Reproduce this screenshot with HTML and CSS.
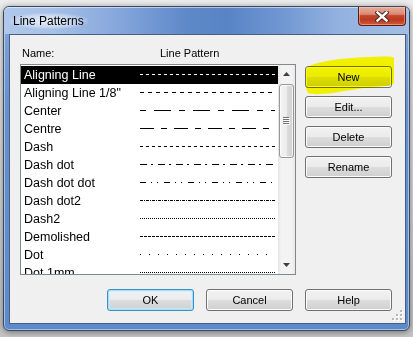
FILE: index.html
```html
<!DOCTYPE html>
<html>
<head>
<meta charset="utf-8">
<title>Line Patterns</title>
<link rel="stylesheet" href="styles.css">
</head>
<body>
<div class="window">
  <div class="titlebar">
    <span class="title">Line Patterns</span>
    <div class="close">
      <svg width="14" height="11" viewBox="0 0 14 11">
        <path class="x-out" d="M2.5 1.5 L11.5 9.5 M11.5 1.5 L2.5 9.5"/>
        <path class="x-in" d="M2.5 1.5 L11.5 9.5 M11.5 1.5 L2.5 9.5"/>
      </svg>
    </div>
  </div>
  <div class="frame">
    <div class="client">
      <div class="main">
        <div class="left">
          <div class="header"><span class="h-name">Name:</span><span class="h-pattern">Line Pattern</span></div>
          <div class="listbox">
            <div class="rows">
              <div class="row selected"><span class="name">Aligning Line</span><svg class="pat" width="135" height="18"><line x1="0" y1="8.5" x2="135" y2="8.5" stroke-dasharray="3 3"/></svg></div>
              <div class="row"><span class="name">Aligning Line 1/8"</span><svg class="pat" width="135" height="18"><line x1="0" y1="8.5" x2="133" y2="8.5" stroke-dasharray="4 4"/></svg></div>
              <div class="row"><span class="name">Center</span><svg class="pat" width="135" height="18"><line x1="0" y1="8.5" x2="135" y2="8.5" stroke-dasharray="6 8 17 8"/></svg></div>
              <div class="row"><span class="name">Centre</span><svg class="pat" width="135" height="18"><line x1="0" y1="8.5" x2="135" y2="8.5" stroke-dasharray="14 7 6 7"/></svg></div>
              <div class="row"><span class="name">Dash</span><svg class="pat" width="135" height="18"><line x1="0" y1="8.5" x2="135" y2="8.5" stroke-dasharray="3 3"/></svg></div>
              <div class="row"><span class="name">Dash dot</span><svg class="pat" width="135" height="18"><line x1="0" y1="8.5" x2="135" y2="8.5" stroke-dasharray="7 4 2 5"/></svg></div>
              <div class="row"><span class="name">Dash dot dot</span><svg class="pat" width="135" height="18"><line x1="0" y1="8.5" x2="135" y2="8.5" stroke-dasharray="6 5 1 5 1 6"/></svg></div>
              <div class="row"><span class="name">Dash dot2</span><svg class="pat" width="135" height="18"><line x1="0" y1="8.5" x2="135" y2="8.5" stroke-dasharray="3 1 1 1"/></svg></div>
              <div class="row"><span class="name">Dash2</span><svg class="pat" width="135" height="18"><line x1="0" y1="8.5" x2="135" y2="8.5" stroke-dasharray="1 1"/></svg></div>
              <div class="row"><span class="name">Demolished</span><svg class="pat" width="135" height="18"><line x1="0" y1="8.5" x2="135" y2="8.5" stroke-dasharray="3 1"/></svg></div>
              <div class="row"><span class="name">Dot</span><svg class="pat" width="135" height="18"><line x1="0" y1="8.5" x2="135" y2="8.5" stroke-dasharray="1 8"/></svg></div>
              <div class="row"><span class="name">Dot 1mm</span><svg class="pat" width="135" height="18"><line x1="0" y1="8.5" x2="135" y2="8.5" stroke-dasharray="1 1"/></svg></div>
            </div>
            <div class="scrollbar">
              <div class="sb-btn">
                <svg width="7" height="4" viewBox="0 0 7 4"><path class="arrow" d="M0 4 L3.5 0 L7 4 Z"/></svg>
              </div>
              <div class="sb-track">
                <div class="thumb">
                  <svg class="gripper" width="7" height="8" viewBox="0 0 7 8">
                    <path class="g-dark" d="M0 0.5 H6 M0 2.5 H6 M0 4.5 H6 M0 6.5 H6"/>
                    <path class="g-light" d="M1 1.5 H7 M1 3.5 H7 M1 5.5 H7 M1 7.5 H7"/>
                  </svg>
                </div>
              </div>
              <div class="sb-btn">
                <svg width="7" height="4" viewBox="0 0 7 4"><path class="arrow" d="M0 0 L7 0 L3.5 4 Z"/></svg>
              </div>
            </div>
          </div>
        </div>
        <div class="side">
          <button class="btn">New</button>
          <button class="btn">Edit...</button>
          <button class="btn">Delete</button>
          <button class="btn">Rename</button>
          <svg class="highlight" width="92" height="40" viewBox="0 0 92 40">
            <path d="M1 13 C4 9 12 7 22 5 C38 2 60 1 78 0.5 C84 0.5 88 0.5 89 2 L89 27 C86 30 80 30 70 31 C55 32 40 35 28 37 C18 38 8 39 3 37 C0.5 34 0.5 24 1 13 Z"/>
          </svg>
        </div>
      </div>
      <div class="footer">
        <button class="btn default">OK</button>
        <button class="btn">Cancel</button>
        <button class="btn">Help</button>
      </div>
      <svg class="sizegrip" width="11" height="11" viewBox="0 0 11 11">
        <rect class="gl" x="9" y="1" width="2" height="2"/><rect class="gd" x="8" y="0" width="2" height="2"/>
        <rect class="gl" x="5" y="5" width="2" height="2"/><rect class="gd" x="4" y="4" width="2" height="2"/>
        <rect class="gl" x="9" y="5" width="2" height="2"/><rect class="gd" x="8" y="4" width="2" height="2"/>
        <rect class="gl" x="1" y="9" width="2" height="2"/><rect class="gd" x="0" y="8" width="2" height="2"/>
        <rect class="gl" x="5" y="9" width="2" height="2"/><rect class="gd" x="4" y="8" width="2" height="2"/>
        <rect class="gl" x="9" y="9" width="2" height="2"/><rect class="gd" x="8" y="8" width="2" height="2"/>
      </svg>
    </div>
  </div>
</div>
</body>
</html>
```

FILE: styles.css
```css
* { box-sizing: border-box; }

html, body {
  margin: 0;
  padding: 0;
}

body {
  width: 413px;
  height: 337px;
  overflow: hidden;
  background: linear-gradient(#ececec, #d6d6d6 60%, #c4c4c4);
  font-family: "Liberation Sans", Arial, sans-serif;
}

.window {
  margin: 6px 0 0 3px;
  width: 407px;
  height: 325px;
  border: 1px solid #3a4a60;
  border-radius: 6px 6px 6px 6px;
  background: linear-gradient(to bottom, #86a8da 0%, #6690cf 30%, #5d8acb 100%);
  box-shadow: 0 1px 6px rgba(0, 0, 0, 0.45), inset 0 0 0 1px rgba(255, 255, 255, 0.45);
  overflow: hidden;
  display: flex;
  flex-direction: column;
}

.titlebar {
  height: 27px;
  flex: none;
  display: flex;
  justify-content: space-between;
  align-items: flex-start;
  padding: 0 3px 0 5px;
  background: linear-gradient(to right, #b0c8ea 0%, #a6c0e7 12%, #86a7dc 28%, #5e89c8 45%, #5884c6 55%, #6f96d1 68%, #93b1df 82%, #a3bde5 100%);
  border-radius: 5px 5px 0 0;
  box-shadow: inset 0 1px 0 rgba(255, 255, 255, 0.5);
}

.title {
  margin-top: 6px;
  padding: 0 4px;
  line-height: 16px;
  font-size: 12px;
  color: #000;
  background: radial-gradient(ellipse at center, rgba(255, 255, 255, 0.75) 0%, rgba(255, 255, 255, 0.35) 55%, rgba(255, 255, 255, 0) 75%);
}

.close {
  width: 48px;
  height: 19px;
  border: 1px solid #5a1d10;
  border-top: none;
  border-radius: 0 0 4px 4px;
  background: linear-gradient(#e7ad9c 0%, #d98b74 40%, #c4462c 48%, #b83a20 70%, #d0583e 100%);
  box-shadow: inset 0 0 0 1px rgba(255, 210, 200, 0.45);
  display: flex;
  align-items: center;
  justify-content: center;
}

.close svg { display: block; margin-top: 1px; }

.x-out { stroke: #4b2a24; stroke-width: 4.4; fill: none; stroke-linecap: square; }
.x-in { stroke: #ffffff; stroke-width: 2.4; fill: none; stroke-linecap: square; }

.frame {
  flex: 1;
  padding: 0 3px 6px 5px;
}

.client {
  position: relative;
  height: 290px;
  border: 1px solid #4a5f80;
  background: #f0f0f0;
  padding: 11px 0 0 10px;
}

.main {
  display: flex;
  align-items: flex-start;
}

.left {
  width: 276px;
  flex: none;
}

.header {
  display: flex;
  height: 18px;
  padding-left: 2px;
  line-height: 14px;
  font-size: 11px;
  color: #000;
}

.h-name { width: 138px; }

.listbox {
  display: flex;
  width: 276px;
  height: 211px;
  border: 1px solid #828790;
  background: #ffffff;
}

.rows {
  width: 257px;
  flex: none;
  padding-top: 1px;
  overflow: hidden;
}

.row {
  display: flex;
  align-items: flex-start;
  height: 18px;
  font-size: 12.5px;
  line-height: 18px;
  color: #000;
}

.name {
  width: 119px;
  flex: none;
  padding-left: 3px;
  white-space: nowrap;
}

.pat { display: block; flex: none; }
.pat line { stroke: #000; stroke-width: 1; }

.row.selected { background: #000; color: #fff; }
.row.selected .pat line { stroke: #fff; }

.scrollbar {
  width: 17px;
  flex: none;
  display: flex;
  flex-direction: column;
  background: linear-gradient(to right, #e5e5e5, #f3f3f3 20%, #f3f3f3 80%, #e8e8e8);
}

.sb-btn {
  height: 18px;
  flex: none;
  display: flex;
  align-items: center;
  justify-content: center;
}

.sb-btn svg { display: block; }
.arrow { fill: #404040; }

.sb-track {
  flex: 1;
  padding: 1px 1px 0 1px;
}

.thumb {
  height: 74px;
  border: 1px solid #979797;
  border-radius: 3px;
  background: linear-gradient(to right, #f4f4f4 0%, #ececec 50%, #dcdcdc 51%, #d2d2d2 100%);
  box-shadow: inset 0 0 0 1px rgba(255, 255, 255, 0.75);
  display: flex;
  align-items: center;
  justify-content: center;
}

.gripper { display: block; }
.g-dark { stroke: #707070; stroke-width: 1; }
.g-light { stroke: #ffffff; stroke-width: 1; }

.side {
  position: relative;
  margin-left: 9px;
  padding-top: 20px;
  display: flex;
  flex-direction: column;
  gap: 8px;
}

.btn {
  width: 87px;
  height: 22px;
  padding: 0;
  border: 1px solid #707070;
  border-radius: 3px;
  background: linear-gradient(#f2f2f2 0%, #ebebeb 48%, #dddddd 52%, #cfcfcf 100%);
  box-shadow: inset 0 0 0 1px #fcfcfc;
  font-family: "Liberation Sans", Arial, sans-serif;
  font-size: 11px;
  color: #000;
  line-height: 20px;
  text-align: center;
}

.btn.default {
  border-color: #3c8fc8;
  box-shadow: inset 0 0 0 1px #9fe0fb, inset 0 0 0 2px rgba(200, 240, 255, 0.6);
}

.highlight {
  position: absolute;
  left: 0;
  top: 10px;
  mix-blend-mode: multiply;
  pointer-events: none;
}

.highlight path { fill: #ffff00; }

.footer {
  display: flex;
  gap: 12px;
  margin-top: 14px;
  padding-left: 87px;
}

.sizegrip {
  position: absolute;
  right: 2px;
  bottom: 2px;
  display: block;
}

.sizegrip .gd { fill: #b8b8b8; }
.sizegrip .gl { fill: #ffffff; }
```
